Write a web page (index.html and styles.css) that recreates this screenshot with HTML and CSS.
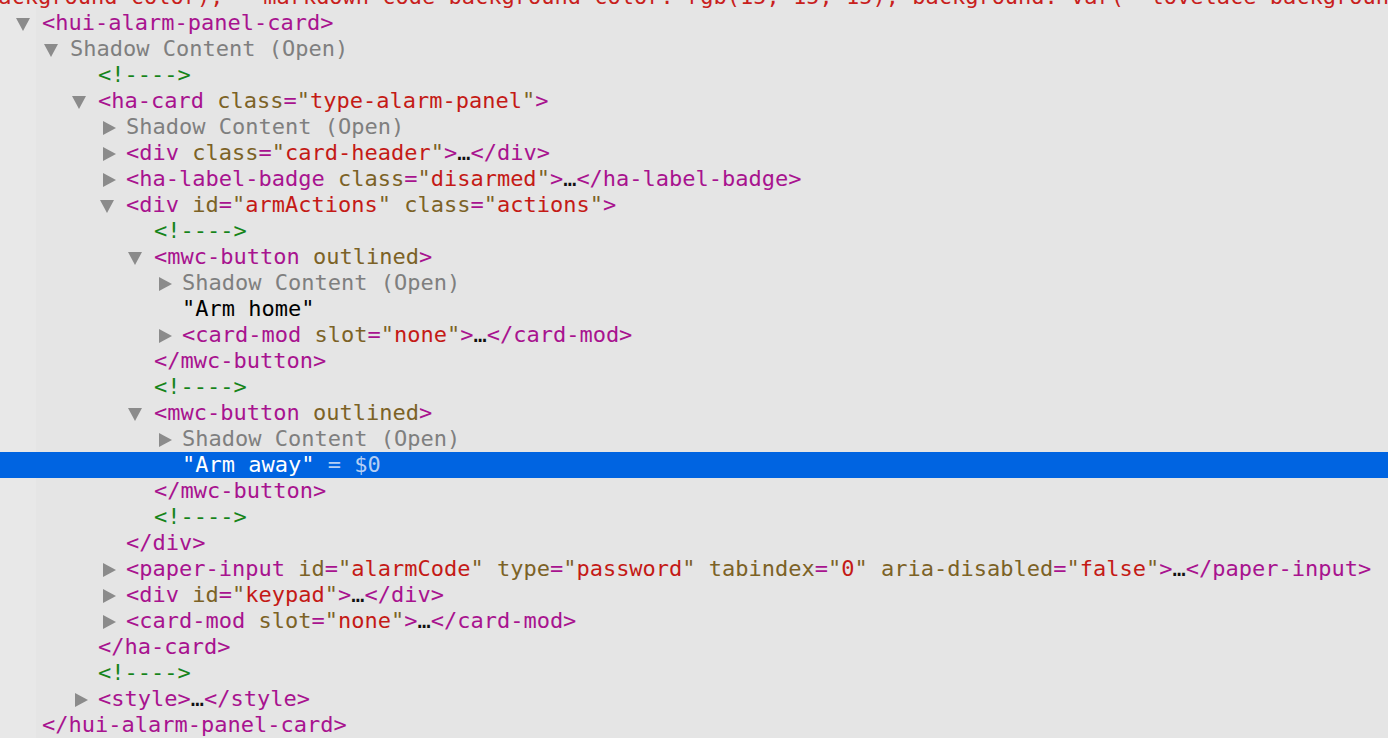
FILE: index.html
```html
<!DOCTYPE html>
<html lang="en">
<head>
  <meta charset="UTF-8">
  <title>Elements</title>
  <link rel="stylesheet" href="styles.css">
</head>
<body>
  <div class="tree">
    <div class="line top-line"><span class="css">background-color); --markdown-code-background-color: rgb(15, 15, 15); background: var(--lovelace-background);</span></div>

    <div class="line l0"><span class="tw open"></span><span class="code"><span class="tag">&lt;hui-alarm-panel-card&gt;</span></span></div>
    <div class="line l1"><span class="tw open"></span><span class="code"><span class="shadow">Shadow Content (Open)</span></span></div>
    <div class="line l2"><span class="tw"></span><span class="code"><span class="comment">&lt;!----&gt;</span></span></div>
    <div class="line l2"><span class="tw open"></span><span class="code"><span class="tag">&lt;ha-card </span><span class="attr">class</span><span class="tag">=</span><span class="attr">"</span><span class="val">type-alarm-panel</span><span class="attr">"</span><span class="tag">&gt;</span></span></div>
    <div class="line l3"><span class="tw closed"></span><span class="code"><span class="shadow">Shadow Content (Open)</span></span></div>
    <div class="line l3"><span class="tw closed"></span><span class="code"><span class="tag">&lt;div </span><span class="attr">class</span><span class="tag">=</span><span class="attr">"</span><span class="val">card-header</span><span class="attr">"</span><span class="tag">&gt;</span><span class="dots">…</span><span class="tag">&lt;/div&gt;</span></span></div>
    <div class="line l3"><span class="tw closed"></span><span class="code"><span class="tag">&lt;ha-label-badge </span><span class="attr">class</span><span class="tag">=</span><span class="attr">"</span><span class="val">disarmed</span><span class="attr">"</span><span class="tag">&gt;</span><span class="dots">…</span><span class="tag">&lt;/ha-label-badge&gt;</span></span></div>
    <div class="line l3"><span class="tw open"></span><span class="code"><span class="tag">&lt;div </span><span class="attr">id</span><span class="tag">=</span><span class="attr">"</span><span class="val">armActions</span><span class="attr">" class</span><span class="tag">=</span><span class="attr">"</span><span class="val">actions</span><span class="attr">"</span><span class="tag">&gt;</span></span></div>
    <div class="line l4"><span class="tw"></span><span class="code"><span class="comment">&lt;!----&gt;</span></span></div>
    <div class="line l4"><span class="tw open"></span><span class="code"><span class="tag">&lt;mwc-button </span><span class="attr">outlined</span><span class="tag">&gt;</span></span></div>
    <div class="line l5"><span class="tw closed"></span><span class="code"><span class="shadow">Shadow Content (Open)</span></span></div>
    <div class="line l5"><span class="tw"></span><span class="code"><span class="text">"Arm home"</span></span></div>
    <div class="line l5"><span class="tw closed"></span><span class="code"><span class="tag">&lt;card-mod </span><span class="attr">slot</span><span class="tag">=</span><span class="attr">"</span><span class="val">none</span><span class="attr">"</span><span class="tag">&gt;</span><span class="dots">…</span><span class="tag">&lt;/card-mod&gt;</span></span></div>
    <div class="line l4"><span class="tw"></span><span class="code"><span class="tag">&lt;/mwc-button&gt;</span></span></div>
    <div class="line l4"><span class="tw"></span><span class="code"><span class="comment">&lt;!----&gt;</span></span></div>
    <div class="line l4"><span class="tw open"></span><span class="code"><span class="tag">&lt;mwc-button </span><span class="attr">outlined</span><span class="tag">&gt;</span></span></div>
    <div class="line l5"><span class="tw closed"></span><span class="code"><span class="shadow">Shadow Content (Open)</span></span></div>
    <div class="line l5 selected"><span class="tw"></span><span class="code"><span class="text">"Arm away"</span><span class="ref"> = $0</span></span></div>
    <div class="line l4"><span class="tw"></span><span class="code"><span class="tag">&lt;/mwc-button&gt;</span></span></div>
    <div class="line l4"><span class="tw"></span><span class="code"><span class="comment">&lt;!----&gt;</span></span></div>
    <div class="line l3"><span class="tw"></span><span class="code"><span class="tag">&lt;/div&gt;</span></span></div>
    <div class="line l3"><span class="tw closed"></span><span class="code"><span class="tag">&lt;paper-input </span><span class="attr">id</span><span class="tag">=</span><span class="attr">"</span><span class="val">alarmCode</span><span class="attr">" type</span><span class="tag">=</span><span class="attr">"</span><span class="val">password</span><span class="attr">" tabindex</span><span class="tag">=</span><span class="attr">"</span><span class="val">0</span><span class="attr">" aria-disabled</span><span class="tag">=</span><span class="attr">"</span><span class="val">false</span><span class="attr">"</span><span class="tag">&gt;</span><span class="dots">…</span><span class="tag">&lt;/paper-input&gt;</span></span></div>
    <div class="line l3"><span class="tw closed"></span><span class="code"><span class="tag">&lt;div </span><span class="attr">id</span><span class="tag">=</span><span class="attr">"</span><span class="val">keypad</span><span class="attr">"</span><span class="tag">&gt;</span><span class="dots">…</span><span class="tag">&lt;/div&gt;</span></span></div>
    <div class="line l3"><span class="tw closed"></span><span class="code"><span class="tag">&lt;card-mod </span><span class="attr">slot</span><span class="tag">=</span><span class="attr">"</span><span class="val">none</span><span class="attr">"</span><span class="tag">&gt;</span><span class="dots">…</span><span class="tag">&lt;/card-mod&gt;</span></span></div>
    <div class="line l2"><span class="tw"></span><span class="code"><span class="tag">&lt;/ha-card&gt;</span></span></div>
    <div class="line l2"><span class="tw"></span><span class="code"><span class="comment">&lt;!----&gt;</span></span></div>
    <div class="line l2"><span class="tw closed"></span><span class="code"><span class="tag">&lt;style&gt;</span><span class="dots">…</span><span class="tag">&lt;/style&gt;</span></span></div>
    <div class="line l0"><span class="tw"></span><span class="code"><span class="tag">&lt;/hui-alarm-panel-card&gt;</span></span></div>
  </div>
</body>
</html>
```

FILE: styles.css
```css
html, body {
  margin: 0;
  padding: 0;
  height: 100%;
  overflow: hidden;
}

body {
  background: linear-gradient(to right, #e8e8e8 0, #e8e8e8 36px, #e5e5e5 36px);
  font-family: "DejaVu Sans Mono", "Liberation Mono", monospace;
  font-size: 22px;
  color: #000;
}

.tree {
  width: 100%;
}

.line {
  display: flex;
  align-items: center;
  height: 26px;
  line-height: 26px;
  white-space: pre;
}

/* the tail of a wrapped style line, scrolled half out of view */
.top-line {
  margin-top: -16px;
  margin-left: -15px;
}

.l0 { padding-left: 14px; }
.l1 { padding-left: 42px; }
.l2 { padding-left: 70px; }
.l3 { padding-left: 98px; }
.l4 { padding-left: 126px; }
.l5 { padding-left: 154px; }

.code {
  white-space: pre;
}

/* disclosure triangles */
.tw {
  flex: 0 0 28px;
  width: 28px;
  height: 26px;
  display: flex;
  align-items: center;
  margin-top: 2px;
}

.tw.open::before {
  content: "";
  margin-left: 2px;
  border-left: 7.5px solid transparent;
  border-right: 7.5px solid transparent;
  border-top: 13px solid #8b8b8b;
}

.tw.closed::before {
  content: "";
  margin-left: 5px;
  border-top: 7.5px solid transparent;
  border-bottom: 7.5px solid transparent;
  border-left: 13px solid #8b8b8b;
}

.tag { color: #a8138f; }
.attr { color: #7c6226; }
.val { color: #c41a16; }
.comment { color: #15841a; }
.shadow { color: #7f7f7f; }
.text { color: #000; }
.dots { color: #111; }
.css { color: #c8201c; }

.selected {
  background-color: #0064e1;
}

.selected .text {
  color: #fff;
}

.selected .ref {
  color: #b5cff4;
}
```
